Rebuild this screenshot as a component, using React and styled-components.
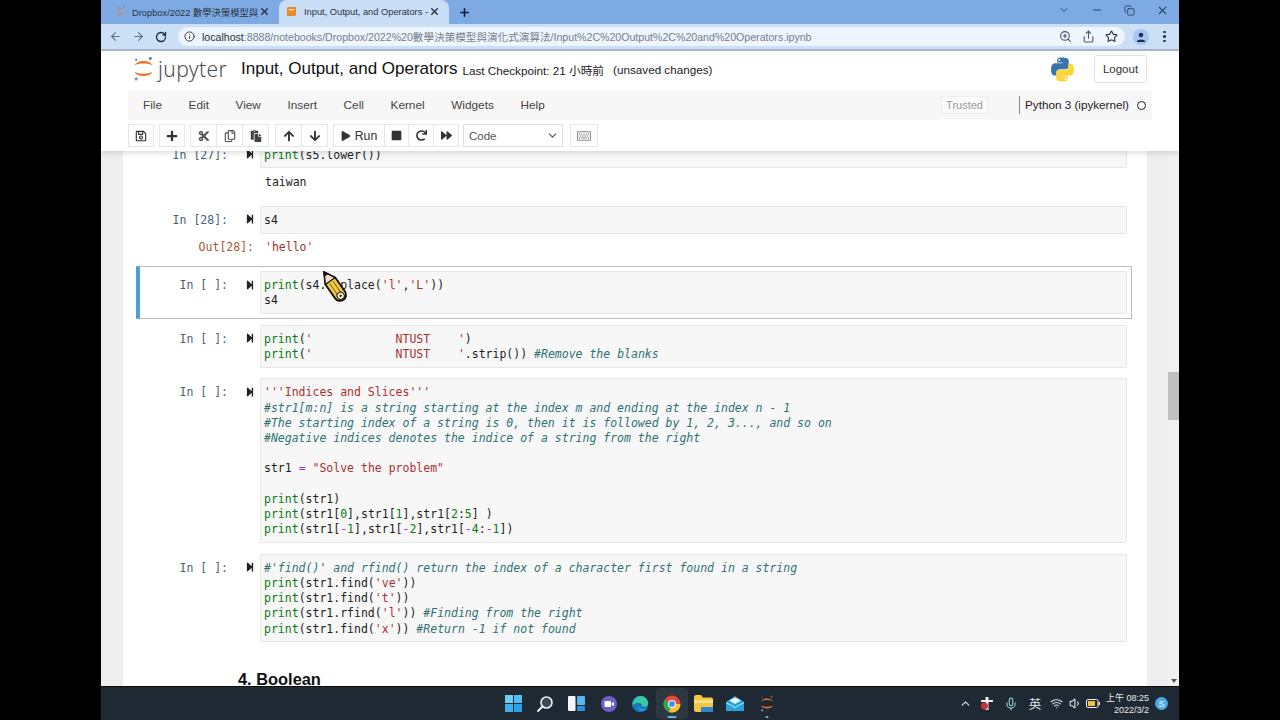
import React from 'react';
import styled, { createGlobalStyle } from 'styled-components';
import {
  FaRegSave, FaPlus, FaCut, FaRegCopy, FaPaste, FaArrowUp, FaArrowDown,
  FaPlay, FaStop, FaRedo, FaForward, FaRegKeyboard, FaStepForward,
} from 'react-icons/fa';
import {
  LuArrowLeft, LuArrowRight, LuRotateCw, LuInfo, LuZoomIn, LuShare, LuStar,
  LuChevronDown, LuMinus, LuCopy, LuX, LuPlus, LuChevronUp, LuMic, LuWifi, LuVolume1,
} from 'react-icons/lu';

const Global = createGlobalStyle`
  html, body { margin: 0; padding: 0; background: #000; }
  body { font-family: "Liberation Sans", Arial, sans-serif; overflow: hidden; }
  * { box-sizing: border-box; }
`;

const SANS = '"Liberation Sans", "Noto Sans CJK TC", sans-serif';
const MONO = '"DejaVu Sans Mono", monospace';

const Stage = styled.div`
  width: 1280px;
  height: 720px;
  background: #000;
  display: flex;
  justify-content: center;
`;

const Screen = styled.div`
  width: 1078px;
  height: 720px;
  display: flex;
  flex-direction: column;
  background: #fff;
  overflow: hidden;
  position: relative;
`;

/* browser chrome */
const TabStrip = styled.div`
  height: 24px;
  background: #7eaae4;
  display: flex;
  align-items: flex-end;
  color: #26303d;
  font-family: ${SANS};
  font-size: 9.3px;
`;

const Tab = styled.div`
  width: ${(p) => p.$w}px;
  height: 24px;
  flex: none;
  display: flex;
  align-items: center;
  gap: 7px;
  padding: 0 9px 1px ${(p) => (p.$active ? 7 : 15)}px;
  background: ${(p) => (p.$active ? '#c9ddf6' : 'transparent')};
  border-radius: 8px 8px 0 0;
  white-space: nowrap;
`;

const TabTitle = styled.span`
  flex: 1;
  min-width: 0;
  color: #2a3440;
`;

const NewTab = styled.div`
  width: 30px;
  height: 24px;
  display: flex;
  align-items: center;
  justify-content: center;
  color: #10203a;
`;

const WindowControls = styled.div`
  margin-left: auto;
  height: 24px;
  display: flex;
  align-items: center;
  gap: 21px;
  padding: 0 10px 4px 0;
  color: #2c4466;
`;

const AddressBar = styled.div`
  height: 27px;
  background: #cbdff7;
  border-bottom: 2px solid #a9b8c9;
  display: flex;
  align-items: center;
  padding-left: 8px;
  color: #5d7086;
`;

const NavIcons = styled.div`
  display: flex;
  gap: 10px;
  align-items: center;
  width: 69px;
  flex: none;
`;

const Omnibox = styled.div`
  width: 947px;
  height: 19px;
  border-radius: 10px;
  background: #eef5fc;
  display: flex;
  align-items: center;
  padding: 0 7px 0 6px;
  gap: 7px;
  font-family: ${SANS};
  font-size: 10.6px;
  color: #75808c;
  white-space: nowrap;
`;

const Host = styled.span`
  color: #2a2f35;
`;

const OmniTools = styled.div`
  margin-left: auto;
  display: flex;
  gap: 10px;
  align-items: center;
  color: #4a5764;
`;

const Avatar = styled.div`
  width: 16px;
  height: 16px;
  border-radius: 50%;
  background: #a8c6ee;
  margin-left: 8px;
  display: flex;
  align-items: center;
  justify-content: center;
`;

const Dots = styled.div`
  margin-left: 14px;
  display: flex;
  flex-direction: column;
  gap: 2px;
  i { width: 2.5px; height: 2.5px; border-radius: 50%; background: #2d3a48; display: block; }
`;

/* jupyter header */
const Header = styled.div`
  flex: none;
  background: #fff;
  position: relative;
  z-index: 2;
  box-shadow: 0 2px 5px rgba(0, 0, 0, 0.14);
`;

const TitleRow = styled.div`
  height: 40px;
  display: flex;
  align-items: center;
  padding: 0 32px 4px 32px;
`;

const LogoText = styled.span`
  font-family: "Noto Sans", sans-serif;
  font-size: 21px;
  font-weight: 300;
  color: #4e4e4e;
  margin-left: 4px;
  letter-spacing: 0.4px;
  line-height: 24px;
  width: 83px;
  flex: none;
`;

const NotebookName = styled.span`
  font-size: 17px;
  color: #111;
  white-space: nowrap;
`;

const Checkpoint = styled.span`
  font-family: ${SANS};
  font-size: 11.7px;
  color: #222;
  margin-left: 5px;
  white-space: nowrap;
`;

const Unsaved = styled(Checkpoint)`
  margin-left: 9px;
`;

const HeaderRight = styled.div`
  margin-left: auto;
  display: flex;
  align-items: center;
  gap: 19px;
`;

const Logout = styled.div`
  width: 53px;
  height: 28px;
  border: 1px solid #e4e4e4;
  border-radius: 2px;
  font-size: 11.5px;
  color: #333;
  display: flex;
  align-items: center;
  justify-content: center;
`;

const MenuBar = styled.div`
  height: 29px;
  margin: 0 27px;
  padding: 0 0 1px 15px;
  background: #f7f7f7;
  display: flex;
  align-items: center;
  gap: 26.6px;
  font-size: 11.8px;
  color: #444;
`;

const KernelArea = styled.div`
  margin-left: auto;
  display: flex;
  align-items: center;
  padding-right: 6px;
  color: #222;
`;

const Trusted = styled.div`
  width: 47px;
  height: 18px;
  background: #fbfbfb;
  border: 1px solid #efefef;
  color: #9a9a9a;
  font-size: 11px;
  display: flex;
  align-items: center;
  justify-content: center;
  margin-right: 31px;
`;

const KernelName = styled.div`
  border-left: 1px solid #888;
  padding-left: 5px;
  height: 18px;
  line-height: 18px;
  font-size: 11.7px;
`;

const KernelDot = styled.div`
  width: 9px;
  height: 9px;
  border: 1.4px solid #222;
  border-radius: 50%;
  margin-left: 8px;
`;

const Toolbar = styled.div`
  height: 31px;
  padding: 4px 0 0 28px;
  display: flex;
  align-items: flex-start;
`;

const BtnGroup = styled.div`
  display: flex;
  margin-right: ${(p) => p.$mr ?? 6}px;
`;

const Btn = styled.div`
  width: ${(p) => p.$w ?? 26}px;
  height: 23px;
  border: 1px solid #e6e6e6;
  margin-left: -1px;
  background: #fff;
  display: flex;
  align-items: center;
  justify-content: center;
  gap: 4px;
  color: ${(p) => p.$c ?? '#333'};
  font-size: 12.3px;
`;

const CellType = styled.div`
  width: 100px;
  height: 23px;
  border: 1px solid #e0e0e0;
  color: #555;
  font-size: 11.5px;
  display: flex;
  align-items: center;
  justify-content: space-between;
  padding: 0 3px 0 5px;
  margin-right: 8px;
`;

/* notebook */
const Workspace = styled.div`
  flex: 1;
  min-height: 0;
  display: flex;
  background: #eeeeee;
`;

const Page = styled.div`
  width: 1024px;
  margin-left: 22px;
  background: #fff;
  overflow: hidden;
  padding: 0 15px 0 13px;
  flex: none;
`;

const Cells = styled.div`
  margin-top: -15.5px;
  display: flex;
  flex-direction: column;
  gap: 0.7px;
`;

const Cell = styled.div`
  padding: 4px 4px 4px ${(p) => (p.$selected ? 1 : 4)}px;
  border: 1px solid ${(p) => (p.$selected ? '#bdbdbd' : 'transparent')};
  border-left: ${(p) => (p.$selected ? '4px solid #4a9fdc' : '1px solid transparent')};
`;

const Row = styled.div`
  display: flex;
  align-items: flex-start;
`;

const Prompt = styled.div`
  width: ${(p) => (p.$out ? 113 : 87)}px;
  flex: none;
  padding: ${(p) => (p.$out ? '6.5px 0 0' : '7px 0 0')};
  text-align: right;
  font-family: ${MONO};
  font-size: 11.5px;
  line-height: 15.2px;
  white-space: pre;
  color: ${(p) => (p.$out ? '#a5593a' : '#4a5f78')};
`;

const RunMark = styled.div`
  width: 32px;
  flex: none;
  height: 27px;
  display: flex;
  align-items: center;
  justify-content: flex-end;
  padding: 0 5px 0 0;
  color: #222;
`;

const Input = styled.pre`
  flex: 1;
  margin: 0;
  padding: 6px 3px 4.6px;
  background: #f7f7f7;
  border: 1px solid #e7e7e7;
  border-radius: 2px;
  font-family: ${MONO};
  font-size: 11.5px;
  line-height: 15.2px;
  color: #1d1d1d;
  white-space: pre;
`;

const Output = styled.pre`
  margin: 0 0 0 ${(p) => p.$ml ?? 124}px;
  padding: 6.5px 0 0;
  height: 26.8px;
  font-family: ${MONO};
  font-size: 11.5px;
  line-height: 15.2px;
  color: #1d1d1d;
`;

const Kw = styled.span`color: #0a7a12;`;
const Str = styled.span`color: #ab3030;`;
const Com = styled.span`color: #2e7272; font-style: italic;`;
const Num = styled.span`color: #0a7a12;`;
const Op = styled.span`color: #a32bd8;`;

const Heading = styled.h2`
  margin: 22px 0 0 102px;
  font-size: 16.4px;
  line-height: 20px;
  font-weight: 700;
  color: #111;
`;

const Scrollbar = styled.div`
  margin-left: auto;
  width: 11px;
  flex: none;
  background: #f1f1f1;
  display: flex;
  flex-direction: column;
`;

const Thumb = styled.div`
  height: 48px;
  margin-top: 221px;
  background: #bfbfbf;
`;

const ScrollArrow = styled.div`
  margin-top: auto;
  margin-bottom: 3px;
  align-self: center;
  width: 0;
  height: 0;
  border-left: 3px solid transparent;
  border-right: 3px solid transparent;
  border-top: 4px solid #555;
`;

/* taskbar */
const Taskbar = styled.div`
  flex: none;
  height: 34px;
  background: #1f2933;
  border-top: 1px solid #0c0c0c;
  display: flex;
  align-items: center;
  position: relative;
  z-index: 3;
  padding-left: 397px;
`;

const Slot = styled.div`
  width: 31.6px;
  height: 31px;
  display: flex;
  align-items: center;
  justify-content: center;
  position: relative;
  border-radius: 3px;
  background: ${(p) => (p.$active ? 'rgba(255,255,255,0.07)' : 'transparent')};
`;

const RunningBar = styled.div`
  position: absolute;
  bottom: 1px;
  left: 50%;
  transform: translateX(-50%);
  width: ${(p) => (p.$active ? 9 : 3)}px;
  height: 2px;
  border-radius: 1px;
  background: ${(p) => (p.$active ? '#62b4e8' : '#9aa3ab')};
`;

const Tray = styled.div`
  margin-left: auto;
  display: flex;
  align-items: center;
  color: #dfe6ec;
  height: 100%;
`;

const TrayItem = styled.div`
  width: ${(p) => p.$w}px;
  display: flex;
  align-items: center;
  justify-content: center;
  color: ${(p) => p.$c ?? '#dfe6ec'};
  font-size: ${(p) => p.$fs ?? 12}px;
  font-family: ${SANS};
`;

const Clock = styled.div`
  width: 46px;
  text-align: right;
  font-family: ${SANS};
  font-size: 9px;
  line-height: 12px;
  color: #e6ebef;
`;

const Badge = styled.div`
  width: 13px;
  height: 13px;
  border-radius: 50%;
  background: #4aa8ea;
  color: #fff;
  font-size: 9px;
  margin: 0 11px 0 6px;
  display: flex;
  align-items: center;
  justify-content: center;
`;

const CursorLayer = styled.svg`
  position: absolute;
  left: 219px;
  top: 268px;
  z-index: 1;
  pointer-events: none;
`;

const JupyterMark = ({ size = 22 }) => (
  <svg width={size} height={size * 1.2} viewBox="0 0 20 24">
    <path d="M1.5 9C4 3.5 16 3.5 18.5 9C15 6.6 5 6.6 1.5 9Z" fill="#e8762d" />
    <path d="M1.5 15C4 20.5 16 20.5 18.5 15C15 17.4 5 17.4 1.5 15Z" fill="#e8762d" />
    <circle cx="16.5" cy="2.4" r="1.4" fill="#767677" />
    <circle cx="3" cy="21.8" r="1.6" fill="#989798" />
    <circle cx="3" cy="3.6" r="1" fill="#616262" />
  </svg>
);

const PY = 'M11.9 0.5C6.5 0.5 6.8 2.8 6.8 2.8V5.2H12V6H4.8C4.8 6 1 5.6 1 11.9C1 18 4.3 17.8 4.3 17.8H6.3V15C6.3 15 6.2 11.7 9.5 11.7H14.9C14.9 11.7 18 11.8 18 8.7V3.6C18 3.6 18.5 0.5 11.9 0.5Z';

const PythonLogo = () => (
  <svg width="25" height="25" viewBox="0 0 24 24">
    <path d={PY} fill="#3a74a6" />
    <circle cx="8.9" cy="2.9" r="0.9" fill="#fff" />
    <g transform="rotate(180 12 12)">
      <path d={PY} fill="#ffd43b" />
      <circle cx="8.9" cy="2.9" r="0.9" fill="#fff" />
    </g>
  </svg>
);

const TaskIcons = {
  windows: (
    <svg width="17" height="17" viewBox="0 0 17 17">
      <rect x="0" y="0" width="8" height="8" fill="#6fd0f5" />
      <rect x="9" y="0" width="8" height="8" fill="#52bdf0" />
      <rect x="0" y="9" width="8" height="8" fill="#3fb0ec" />
      <rect x="9" y="9" width="8" height="8" fill="#2a9fe3" />
    </svg>
  ),
  search: (
    <svg width="18" height="18" viewBox="0 0 18 18">
      <circle cx="10.5" cy="7.5" r="5.5" fill="#3e4852" stroke="#eef2f5" strokeWidth="1.6" />
      <path d="M6.5 11.5L2 16" stroke="#eef2f5" strokeWidth="2" strokeLinecap="round" />
    </svg>
  ),
  widgets: (
    <svg width="17" height="15" viewBox="0 0 17 15">
      <rect x="0" y="0" width="7.5" height="15" rx="1" fill="#f2f6fa" />
      <rect x="9" y="0" width="8" height="9" rx="1" fill="#5ab6ee" />
      <rect x="9" y="10" width="8" height="5" rx="1" fill="#2f8fd8" />
    </svg>
  ),
  teams: (
    <svg width="18" height="18" viewBox="0 0 18 18">
      <circle cx="9" cy="9" r="8" fill="#6a60c8" />
      <rect x="4.5" y="6" width="6.5" height="6" rx="1" fill="#fff" />
      <path d="M11.5 8.5L14 6.8V11.2L11.5 9.5Z" fill="#fff" />
    </svg>
  ),
  edge: (
    <svg width="18" height="18" viewBox="0 0 18 18">
      <circle cx="9" cy="9" r="8.2" fill="#1477b8" />
      <path d="M1.5 10C2 4.5 6 1 9.5 1C14 1 17.2 4.5 17.2 8.5C17.2 11 15 12 13 11.8C11 11.6 10.6 10.4 11 9.4C9 7.6 5 7.6 1.5 10Z" fill="#38c9a5" />
      <path d="M6.8 10.5C6.5 13.5 9 16.5 12.5 16C14.5 15.6 16 14.4 16.8 13C14 14.5 9 14.8 6.8 10.5Z" fill="#2a9bd6" />
    </svg>
  ),
  chrome: (
    <svg width="18" height="18" viewBox="0 0 18 18">
      <circle cx="9" cy="9" r="8.4" fill="#e8453c" />
      <path d="M9 9L1.7 4.8A8.4 8.4 0 0 0 6 17L9 9Z" fill="#2fa84f" />
      <path d="M9 9H17.4A8.4 8.4 0 0 1 6 17L9 9Z" fill="#f9c32b" />
      <circle cx="9" cy="9" r="4" fill="#fff" />
      <circle cx="9" cy="9" r="3" fill="#4a8ef0" />
    </svg>
  ),
  files: (
    <svg width="19" height="17" viewBox="0 0 19 17">
      <path d="M0 2C0 1 .6 0 2 0H7L9 2.5H17C18 2.5 19 3 19 4V15C19 16 18 17 17 17H2C1 17 0 16 0 15Z" fill="#f6c641" />
      <rect x="0" y="5" width="19" height="3" fill="#fbe08a" />
      <rect x="7" y="12" width="12" height="5" fill="#2e86cf" />
    </svg>
  ),
  mail: (
    <svg width="18" height="15" viewBox="0 0 18 15">
      <path d="M9 0L18 6V15H0V6Z" fill="#29a3dc" />
      <path d="M0 6L9 11L18 6V7L9 12L0 7Z" fill="#bfe7f7" />
      <path d="M3 4.5L9 1.5L15 4.5L9 8Z" fill="#e8f6fc" />
    </svg>
  ),
};

function App() {
  return (
    <>
      <Global />
      <Stage>
        <Screen>
          <TabStrip>
            <Tab $w={178}>
              <JupyterMark size={9} />
              <TabTitle>Dropbox/2022 數學決策模型與</TabTitle>
              <LuX size={11} strokeWidth={3} />
            </Tab>
            <Tab $w={170} $active>
              <svg width="11" height="11" viewBox="0 0 11 11">
                <path d="M1 2.5C1 1.5 2 1 3 1H10V8.5C10 9.5 9 10 8 10H1Z" fill="#e8892d" />
                <rect x="3" y="3" width="5" height="1.4" fill="#fce2b8" />
              </svg>
              <TabTitle>Input, Output, and Operators -</TabTitle>
              <LuX size={11} strokeWidth={3} />
            </Tab>
            <NewTab><LuPlus size={13} strokeWidth={3} /></NewTab>
            <WindowControls>
              <LuChevronDown size={12} />
              <LuMinus size={12} />
              <LuCopy size={11} />
              <LuX size={13} />
            </WindowControls>
          </TabStrip>
          <AddressBar>
            <NavIcons>
              <LuArrowLeft size={13} />
              <LuArrowRight size={13} />
              <LuRotateCw size={12} color="#1f2a36" strokeWidth={2.6} />
            </NavIcons>
            <Omnibox>
              <LuInfo size={11} color="#333" />
              <span><Host>localhost</Host>:8888/notebooks/Dropbox/2022%20數學決策模型與演化式演算法/Input%2C%20Output%2C%20and%20Operators.ipynb</span>
              <OmniTools>
                <LuZoomIn size={13} />
                <LuShare size={13} />
                <LuStar size={13} color="#26303a" />
              </OmniTools>
            </Omnibox>
            <Avatar>
              <svg width="10" height="10" viewBox="0 0 10 10">
                <circle cx="5" cy="3" r="2.3" fill="#14305c" />
                <path d="M0.8 10C1 6.8 9 6.8 9.2 10Z" fill="#14305c" />
              </svg>
            </Avatar>
            <Dots><i /><i /><i /></Dots>
          </AddressBar>
          <Header>
            <TitleRow>
              <JupyterMark size={21} />
              <LogoText>jupyter</LogoText>
              <NotebookName>Input, Output, and Operators</NotebookName>
              <Checkpoint>Last Checkpoint: 21 小時前</Checkpoint>
              <Unsaved>(unsaved changes)</Unsaved>
              <HeaderRight>
                <PythonLogo />
                <Logout>Logout</Logout>
              </HeaderRight>
            </TitleRow>
            <MenuBar>
              {['File', 'Edit', 'View', 'Insert', 'Cell', 'Kernel', 'Widgets', 'Help'].map((m) => (
                <span key={m}>{m}</span>
              ))}
              <KernelArea>
                <Trusted>Trusted</Trusted>
                <KernelName>Python 3 (ipykernel)</KernelName>
                <KernelDot />
              </KernelArea>
            </MenuBar>
            <Toolbar>
              <BtnGroup><Btn><FaRegSave size={12} /></Btn></BtnGroup>
              <BtnGroup><Btn><FaPlus size={12} /></Btn></BtnGroup>
              <BtnGroup $mr={7}>
                <Btn $w={27} $c="#555"><FaCut size={12} /></Btn>
                <Btn $w={27} $c="#555"><FaRegCopy size={12} /></Btn>
                <Btn $w={27} $c="#444"><FaPaste size={12} /></Btn>
              </BtnGroup>
              <BtnGroup $mr={6}>
                <Btn $w={27}><FaArrowUp size={12} /></Btn>
                <Btn $w={27}><FaArrowDown size={12} /></Btn>
              </BtnGroup>
              <BtnGroup $mr={4}>
                <Btn $w={52}><FaPlay size={10} />Run</Btn>
                <Btn $w={25}><FaStop size={11} /></Btn>
                <Btn $w={26}><FaRedo size={11} /></Btn>
                <Btn><FaForward size={11} /></Btn>
              </BtnGroup>
              <CellType>
                Code
                <LuChevronDown size={13} />
              </CellType>
              <BtnGroup><Btn $w={28} $c="#888"><FaRegKeyboard size={14} /></Btn></BtnGroup>
            </Toolbar>
          </Header>
          <Workspace>
            <Page>
              <Cells>
                <Cell>
                  <Row>
                    <Prompt>In [27]:</Prompt>
                    <RunMark><FaStepForward size={10} /></RunMark>
                    <Input><Kw>print</Kw>(s5.lower())</Input>
                  </Row>
                  <Row>
                    <Output>taiwan</Output>
                  </Row>
                </Cell>
                <Cell>
                  <Row>
                    <Prompt>In [28]:</Prompt>
                    <RunMark><FaStepForward size={10} /></RunMark>
                    <Input>s4</Input>
                  </Row>
                  <Row>
                    <Prompt $out>Out[28]:</Prompt>
                    <Output $ml={11}><Str>'hello'</Str></Output>
                  </Row>
                </Cell>
                <Cell $selected>
                  <Row>
                    <Prompt>In [ ]:</Prompt>
                    <RunMark><FaStepForward size={10} /></RunMark>
                    <Input>
                      <Kw>print</Kw>(s4.replace(<Str>'l'</Str>,<Str>'L'</Str>)){'\n'}s4
                    </Input>
                  </Row>
                </Cell>
                <Cell>
                  <Row>
                    <Prompt>In [ ]:</Prompt>
                    <RunMark><FaStepForward size={10} /></RunMark>
                    <Input>
                      <Kw>print</Kw>(<Str>'            NTUST    '</Str>){'\n'}
                      <Kw>print</Kw>(<Str>'            NTUST    '</Str>.strip()) <Com>#Remove the blanks</Com>
                    </Input>
                  </Row>
                </Cell>
                <Cell>
                  <Row>
                    <Prompt>In [ ]:</Prompt>
                    <RunMark><FaStepForward size={10} /></RunMark>
                    <Input>
                      <Str>'''Indices and Slices'''</Str>{'\n'}
                      <Com>#str1[m:n] is a string starting at the index m and ending at the index n - 1</Com>{'\n'}
                      <Com>#The starting index of a string is 0, then it is followed by 1, 2, 3..., and so on</Com>{'\n'}
                      <Com>#Negative indices denotes the indice of a string from the right</Com>{'\n'}
                      {'\n'}
                      str1 <Op>=</Op> <Str>"Solve the problem"</Str>{'\n'}
                      {'\n'}
                      <Kw>print</Kw>(str1){'\n'}
                      <Kw>print</Kw>(str1[<Num>0</Num>],str1[<Num>1</Num>],str1[<Num>2</Num>:<Num>5</Num>] ){'\n'}
                      <Kw>print</Kw>(str1[<Op>-</Op><Num>1</Num>],str1[<Op>-</Op><Num>2</Num>],str1[<Op>-</Op><Num>4</Num>:<Op>-</Op><Num>1</Num>])
                    </Input>
                  </Row>
                </Cell>
                <Cell>
                  <Row>
                    <Prompt>In [ ]:</Prompt>
                    <RunMark><FaStepForward size={10} /></RunMark>
                    <Input>
                      <Com>#'find()' and rfind() return the index of a character first found in a string</Com>{'\n'}
                      <Kw>print</Kw>(str1.find(<Str>'ve'</Str>)){'\n'}
                      <Kw>print</Kw>(str1.find(<Str>'t'</Str>)){'\n'}
                      <Kw>print</Kw>(str1.rfind(<Str>'l'</Str>)) <Com>#Finding from the right</Com>{'\n'}
                      <Kw>print</Kw>(str1.find(<Str>'x'</Str>)) <Com>#Return -1 if not found</Com>
                    </Input>
                  </Row>
                </Cell>
              </Cells>
              <Heading>4. Boolean</Heading>
            </Page>
            <Scrollbar>
              <Thumb />
              <ScrollArrow />
            </Scrollbar>
          </Workspace>
          <Taskbar>
            <Slot>{TaskIcons.windows}</Slot>
            <Slot>{TaskIcons.search}</Slot>
            <Slot>{TaskIcons.widgets}</Slot>
            <Slot>{TaskIcons.teams}</Slot>
            <Slot>{TaskIcons.edge}</Slot>
            <Slot $active>{TaskIcons.chrome}<RunningBar $active /></Slot>
            <Slot>{TaskIcons.files}</Slot>
            <Slot>{TaskIcons.mail}</Slot>
            <Slot><JupyterMark size={14} /><RunningBar /></Slot>
            <Tray>
              <TrayItem $w={22}><LuChevronUp size={13} /></TrayItem>
              <TrayItem $w={22} $c="#d2465a">
                <svg width="12" height="13" viewBox="0 0 12 13">
                  <rect x="4.5" y="0" width="3" height="13" fill="#eee" />
                  <rect x="0" y="3" width="12" height="2" fill="#eee" />
                  <circle cx="3.5" cy="9" r="3.5" fill="#c9303f" />
                </svg>
              </TrayItem>
              <TrayItem $w={26} $c="#8fc7cf"><LuMic size={14} /></TrayItem>
              <TrayItem $w={22} $fs={12.5}>英</TrayItem>
              <TrayItem $w={21}><LuWifi size={13} /></TrayItem>
              <TrayItem $w={16}><LuVolume1 size={13} /></TrayItem>
              <TrayItem $w={20}>
                <svg width="14" height="9" viewBox="0 0 14 9">
                  <rect x="0.5" y="0.5" width="11.5" height="8" rx="1.5" fill="none" stroke="#eee" />
                  <rect x="2" y="2" width="7" height="5" fill="#f0c040" />
                  <rect x="12.5" y="3" width="1.5" height="3" fill="#eee" />
                </svg>
              </TrayItem>
              <Clock>上午 08:25<br />2022/3/2</Clock>
              <Badge>S</Badge>
            </Tray>
          </Taskbar>
          <CursorLayer width="30" height="38" viewBox="0 0 30 38">
            <g transform="translate(4 4) rotate(-35)">
              <path d="M0 0L6 11V28A6 6 0 0 1 -6 28V11Z" fill="#efc94a" stroke="#111" strokeWidth="1.8" strokeLinejoin="round" />
              <path d="M0 0L6 11H-6Z" fill="#f7dcc8" stroke="#111" strokeWidth="1.3" strokeLinejoin="round" />
              <path d="M0 -1L2.4 4H-2.4Z" fill="#111" />
              <path d="M-2 13V26M2 13V26" stroke="#8a6a14" strokeWidth="1" />
              <circle cx="0" cy="29" r="3.6" fill="#fff6d8" stroke="#111" strokeWidth="1" />
              <circle cx="0" cy="29" r="1.1" fill="#111" />
            </g>
          </CursorLayer>
        </Screen>
      </Stage>
    </>
  );
}

export default App;
